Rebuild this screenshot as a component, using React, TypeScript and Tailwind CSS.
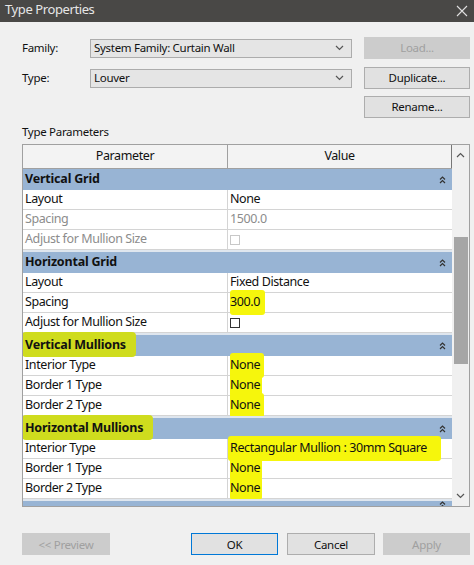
import React from 'react';

type Row = { label: string; value?: React.ReactNode; dim?: boolean };
type Group = { title: React.ReactNode; rows: Row[] };

const Mark = ({ children, className = '' }: { children: React.ReactNode; className?: string }) => (
  <span className={`rounded-[3px] bg-[#f6f60c] ${className}`}>{children}</span>
);

const HeadMark = ({ children }: { children: React.ReactNode }) => (
  <span className="-ml-[3px] rounded-[4px] bg-[#cfdc1e] py-[4px] pl-[3px] pr-[10px]">{children}</span>
);

const CheckBox = ({ dim }: { dim?: boolean }) => (
  <span className={`inline-block h-[10px] w-[10px] border ${dim ? 'border-[#c8c8c8]' : 'border-[#333]'} bg-white`} />
);

const DoubleUp = () => (
  <svg width="7" height="8" viewBox="0 0 7 8" className="text-[#333]">
    <path d="M1 3.5 L3.5 1 L6 3.5 M1 7 L3.5 4.5 L6 7" fill="none" stroke="currentColor" strokeWidth="1.2" />
  </svg>
);

const Chevron = ({ up }: { up?: boolean }) => (
  <svg width="9" height="6" viewBox="0 0 9 6">
    <path d={up ? 'M1 5 L4.5 1.5 L8 5' : 'M1 1 L4.5 4.5 L8 1'} fill="none" stroke="#555" strokeWidth="1.2" />
  </svg>
);

const groups: Group[] = [
  {
    title: 'Vertical Grid',
    rows: [
      { label: 'Layout', value: 'None' },
      { label: 'Spacing', value: '1500.0', dim: true },
      { label: 'Adjust for Mullion Size', value: <CheckBox dim />, dim: true },
    ],
  },
  {
    title: 'Horizontal Grid',
    rows: [
      { label: 'Layout', value: 'Fixed Distance' },
      { label: 'Spacing', value: <Mark className="py-[3px] pr-[5px]">300.0</Mark> },
      { label: 'Adjust for Mullion Size', value: <CheckBox /> },
    ],
  },
  {
    title: <HeadMark>Vertical Mullions</HeadMark>,
    rows: [
      { label: 'Interior Type', value: <Mark className="py-[3px] pr-[4px]">None</Mark> },
      { label: 'Border 1 Type', value: <Mark className="py-[2px] pr-[2px]">None</Mark> },
      { label: 'Border 2 Type', value: <Mark className="py-[3px] pr-[4px]">None</Mark> },
    ],
  },
  {
    title: <HeadMark>Horizontal Mullions</HeadMark>,
    rows: [
      { label: 'Interior Type', value: <Mark className="-ml-[2px] py-[3px] pl-[2px] pr-[14px]">Rectangular Mullion : 30mm Square</Mark> },
      { label: 'Border 1 Type', value: <Mark className="py-[2px] pr-[2px]">None</Mark> },
      { label: 'Border 2 Type', value: <Mark className="py-[2px] pr-[2px]">None</Mark> },
    ],
  },
];

const Button = ({ children, disabled, primary, className = '' }: { children: React.ReactNode; disabled?: boolean; primary?: boolean; className?: string }) => (
  <div
    className={`flex h-[22px] items-center justify-center border text-[11.5px] tracking-[-0.3px] ${
      disabled
        ? 'border-[#cccccc] bg-[#cccccc] text-[#a0a0a0]'
        : primary
        ? 'border-[#0078d7] bg-[#e1e1e1] text-[#111]'
        : 'border-[#adadad] bg-[#e1e1e1] text-[#111]'
    } ${className}`}
  >
    {children}
  </div>
);

const Combo = ({ value }: { value: string }) => (
  <div className="flex h-[19px] w-[262px] items-center justify-between border border-[#acacac] bg-[#e5e5e5] pl-[3px] pr-[7px] text-[11.5px] tracking-[-0.3px] text-[#111]">
    <span>{value}</span>
    <Chevron />
  </div>
);

export default function App() {
  return (
    <div className="flex h-[565px] w-[474px] flex-col overflow-hidden bg-[#f0f0f0] font-['Noto_Sans','Open_Sans',sans-serif]">
      {/* title bar */}
      <div className="flex h-[22px] items-center justify-between bg-[#494846] pl-[5px] pr-[5px] text-[13px] tracking-[-0.4px] text-[#e6e6e6]">
        <span className="-mt-[2px]">Type Properties</span>
        <svg width="14" height="14" viewBox="0 0 14 14">
          <path d="M2 2 L12 12 M12 2 L2 12" stroke="#e0e0e0" strokeWidth="1.1" />
        </svg>
      </div>

      {/* family / type */}
      <div className="mt-[15px] flex pl-[22px] pr-[4px]">
        <div className="flex w-[330px] flex-col gap-[8px]">
          <div className="flex h-[22px] items-center">
            <span className="w-[68px] text-[11.5px] tracking-[-0.3px] text-[#111]">Family:</span>
            <Combo value="System Family: Curtain Wall" />
          </div>
          <div className="flex h-[22px] items-center">
            <span className="w-[68px] text-[11.5px] tracking-[-0.3px] text-[#111]">Type:</span>
            <Combo value="Louver" />
          </div>
        </div>
        <div className="ml-[12px] flex w-[106px] flex-col gap-[8px]">
          <Button disabled>Load...</Button>
          <Button>Duplicate...</Button>
          <Button className="-mt-[1px]">Rename...</Button>
        </div>
      </div>

      <div className="mt-[5px] pl-[22px] text-[11.5px] tracking-[-0.3px] text-[#111]">Type Parameters</div>

      {/* table */}
      <div className="ml-[22px] mr-[4px] mt-[4px] flex h-[363px] border border-[#a0a0a0] bg-white">
        <div className="flex w-[430px] flex-col overflow-hidden tracking-[-0.4px]">
          <div className="flex h-[24px] shrink-0 border-b border-[#a0a0a0] bg-[#f3f3f3] text-[12.5px] text-[#111]">
            <div className="flex w-[205px] items-center justify-center border-r border-[#a0a0a0]">Parameter</div>
            <div className="flex flex-1 items-center justify-center border-r border-[#777]">Value</div>
          </div>
          {groups.map((g, gi) => (
            <div key={gi} className="shrink-0">
              <div
                className={`flex items-center justify-between bg-[#98b4d4] pl-[2px] pr-[6px] text-[12.5px] font-bold tracking-[-0.2px] text-[#111] ${
                  gi > 0 ? 'h-[23px] border-t-2 border-[#dfe6ee]' : 'h-[21px]'
                }`}
              >
                <span>{g.title}</span>
                <DoubleUp />
              </div>
              {g.rows.map((r, ri) => (
                <div key={ri} className="flex h-[20px] border-b border-[#d4d4d4] text-[12.5px]">
                  <div className={`flex w-[205px] items-center border-r border-[#d4d4d4] pl-[2px] ${r.dim ? 'text-[#8c8c8c]' : 'text-[#111]'}`}>
                    {r.label}
                  </div>
                  <div className={`flex flex-1 items-center pl-[2px] ${r.dim ? 'text-[#8c8c8c]' : 'text-[#111]'}`}>{r.value}</div>
                </div>
              ))}
            </div>
          ))}
          <div className="flex h-[23px] shrink-0 items-start justify-end border-t-2 border-[#dfe6ee] bg-[#98b4d4] pr-[6px]">
            <DoubleUp />
          </div>
        </div>
        {/* scrollbar */}
        <div className="flex w-[17px] flex-col items-center bg-[#f0f0f0]">
          <div className="flex h-[20px] items-center">
            <Chevron up />
          </div>
          <div className="mt-[72px] h-[127px] w-[14px] bg-[#a6a6a6]" />
          <div className="flex-1" />
          <div className="flex h-[20px] items-center">
            <Chevron />
          </div>
        </div>
      </div>

      {/* bottom buttons */}
      <div className="mt-[26px] flex pl-[22px]">
        <Button disabled className="w-[88px]">&lt;&lt; Preview</Button>
        <Button primary className="ml-[81px] w-[87px]">OK</Button>
        <Button className="ml-[9px] w-[88px]">Cancel</Button>
        <Button disabled className="ml-[8px] w-[87px]">Apply</Button>
      </div>
    </div>
  );
}
